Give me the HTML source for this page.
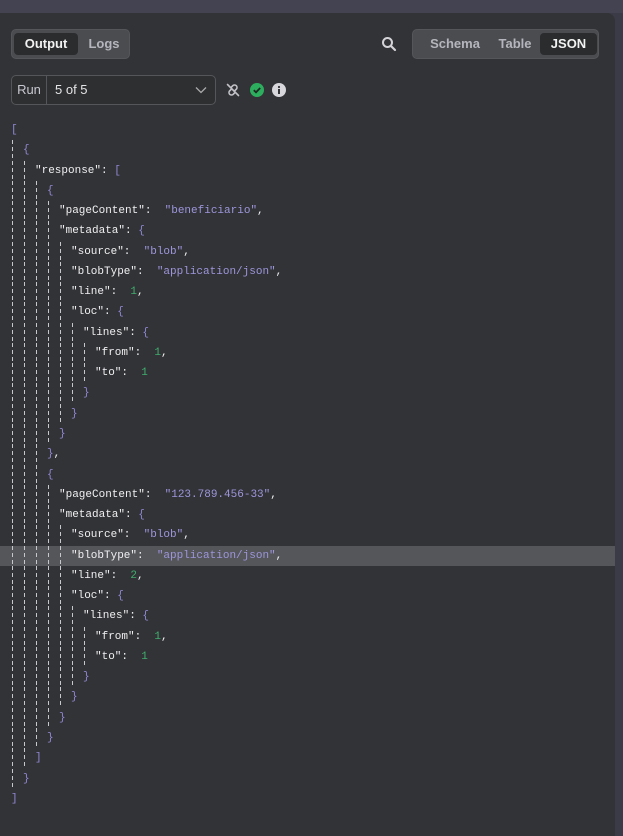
<!DOCTYPE html>
<html><head><meta charset="utf-8"><style>
*{margin:0;padding:0;box-sizing:border-box}
body{width:623px;height:836px;background:#3b3b47;position:relative;overflow:hidden;font-family:"Liberation Sans",sans-serif}
.top{position:absolute;left:0;top:0;width:623px;height:13px;background:#434352}
.panel{position:absolute;left:0;top:13px;width:615px;height:823px;background:#323336;border-top-right-radius:8px}
.seg{position:absolute;top:29px;height:30px;background:#4b4c50;border-radius:5px;border:1px solid #55565a}
.seg span{position:absolute;top:3px;height:22px;line-height:22px;font-size:13px;font-weight:bold;color:#b5b6bd;text-align:center}
.seg span.on{background:#2b2c2e;color:#f2f2f2;border-radius:4px}
.run{position:absolute;left:11px;top:75px;width:205px;height:30px;border:1px solid #55565a;border-radius:5px;background:#2e2f31}
.code{position:absolute;left:0;top:120px;font-family:"Liberation Mono","DejaVu Sans Mono",monospace;font-size:11px;color:#f0f0f2}
.l{position:relative;height:20.27px;line-height:20.27px;white-space:pre;width:615px}
.l.hl{background:#55565a}
.g{position:absolute;display:block;top:0;width:1px;height:20.27px;background:repeating-linear-gradient(to bottom,#c8c8cc 0 4px,transparent 4px 7px)}
.b{color:#8f87d2}.s{color:#9d96dc}.n{color:#3fae6e}
.v{margin-left:1px}
</style></head><body>
<div class="top"></div>
<div class="panel"></div>
<div class="seg" style="left:11px;width:119px"><span class="on" style="left:2px;width:64px">Output</span><span style="left:68px;width:48px">Logs</span></div>
<svg style="position:absolute;left:381px;top:36px" width="16" height="16" viewBox="0 0 16 16"><circle cx="6.5" cy="6.5" r="4.5" fill="none" stroke="#d4d4d8" stroke-width="2"/><line x1="10" y1="10" x2="14" y2="14" stroke="#d4d4d8" stroke-width="2.2" stroke-linecap="round"/></svg>
<div class="seg" style="left:412px;width:187px"><span style="left:6px;width:72px">Schema</span><span style="left:78px;width:48px">Table</span><span class="on" style="left:127px;width:57px">JSON</span></div>
<div class="run"><span style="position:absolute;left:0;top:0;width:35px;height:28px;line-height:28px;text-align:center;font-size:13px;color:#c8c8d0;border-right:1px solid #55565a">Run</span><span style="position:absolute;left:43px;top:0;line-height:28px;font-size:13px;color:#e4e4e6">5 of 5</span>
<svg style="position:absolute;left:183px;top:9px" width="12" height="10" viewBox="0 0 12 10"><path d="M1 2.5L6 7.5L11 2.5" fill="none" stroke="#aaa" stroke-width="1.3"/></svg></div>
<svg style="position:absolute;left:226px;top:83px" width="14" height="14" viewBox="0 0 14 14" fill="none" stroke="#c0c0c6" stroke-width="1.6" stroke-linecap="round"><path d="M5.5 4L7 2.5a2.5 2.5 0 0 1 3.5 3.5L9 7.5M8.5 10L7 11.5a2.5 2.5 0 0 1-3.5-3.5L5 6.5M1.5 1.5l11 11"/></svg>
<svg style="position:absolute;left:250px;top:83px" width="14" height="14" viewBox="0 0 14 14"><circle cx="7" cy="7" r="7" fill="#2dae5e"/><path d="M3.8 7.2L6 9.3L10.2 5" fill="none" stroke="#1d2a22" stroke-width="1.8"/></svg>
<svg style="position:absolute;left:272px;top:83px" width="14" height="14" viewBox="0 0 14 14"><circle cx="7" cy="7" r="7" fill="#d8d8dc"/><rect x="6" y="6" width="2" height="5" fill="#323336"/><circle cx="7" cy="4" r="1.1" fill="#323336"/></svg>
<div class="code">
<div class="l" style="padding-left:11px"><span class="b">[</span></div>
<div class="l" style="padding-left:23px"><span class="g" style="left:12px"></span><span class="b">{</span></div>
<div class="l" style="padding-left:35px"><span class="g" style="left:12px"></span><span class="g" style="left:24px"></span>"response": <span class="b">[</span></div>
<div class="l" style="padding-left:47px"><span class="g" style="left:12px"></span><span class="g" style="left:24px"></span><span class="g" style="left:36px"></span><span class="b">{</span></div>
<div class="l" style="padding-left:59px"><span class="g" style="left:12px"></span><span class="g" style="left:24px"></span><span class="g" style="left:36px"></span><span class="g" style="left:48px"></span>"pageContent":  <span class="s">"beneficiario"</span>,</div>
<div class="l" style="padding-left:59px"><span class="g" style="left:12px"></span><span class="g" style="left:24px"></span><span class="g" style="left:36px"></span><span class="g" style="left:48px"></span>"metadata": <span class="b">{</span></div>
<div class="l" style="padding-left:71px"><span class="g" style="left:12px"></span><span class="g" style="left:24px"></span><span class="g" style="left:36px"></span><span class="g" style="left:48px"></span><span class="g" style="left:60px"></span>"source":  <span class="s">"blob"</span>,</div>
<div class="l" style="padding-left:71px"><span class="g" style="left:12px"></span><span class="g" style="left:24px"></span><span class="g" style="left:36px"></span><span class="g" style="left:48px"></span><span class="g" style="left:60px"></span>"blobType":  <span class="s">"application/json"</span>,</div>
<div class="l" style="padding-left:71px"><span class="g" style="left:12px"></span><span class="g" style="left:24px"></span><span class="g" style="left:36px"></span><span class="g" style="left:48px"></span><span class="g" style="left:60px"></span>"line":  <span class="n">1</span>,</div>
<div class="l" style="padding-left:71px"><span class="g" style="left:12px"></span><span class="g" style="left:24px"></span><span class="g" style="left:36px"></span><span class="g" style="left:48px"></span><span class="g" style="left:60px"></span>"loc": <span class="b">{</span></div>
<div class="l" style="padding-left:83px"><span class="g" style="left:12px"></span><span class="g" style="left:24px"></span><span class="g" style="left:36px"></span><span class="g" style="left:48px"></span><span class="g" style="left:60px"></span><span class="g" style="left:72px"></span>"lines": <span class="b">{</span></div>
<div class="l" style="padding-left:95px"><span class="g" style="left:12px"></span><span class="g" style="left:24px"></span><span class="g" style="left:36px"></span><span class="g" style="left:48px"></span><span class="g" style="left:60px"></span><span class="g" style="left:72px"></span><span class="g" style="left:84px"></span>"from":  <span class="n">1</span>,</div>
<div class="l" style="padding-left:95px"><span class="g" style="left:12px"></span><span class="g" style="left:24px"></span><span class="g" style="left:36px"></span><span class="g" style="left:48px"></span><span class="g" style="left:60px"></span><span class="g" style="left:72px"></span><span class="g" style="left:84px"></span>"to":  <span class="n">1</span></div>
<div class="l" style="padding-left:83px"><span class="g" style="left:12px"></span><span class="g" style="left:24px"></span><span class="g" style="left:36px"></span><span class="g" style="left:48px"></span><span class="g" style="left:60px"></span><span class="g" style="left:72px"></span><span class="b">}</span></div>
<div class="l" style="padding-left:71px"><span class="g" style="left:12px"></span><span class="g" style="left:24px"></span><span class="g" style="left:36px"></span><span class="g" style="left:48px"></span><span class="g" style="left:60px"></span><span class="b">}</span></div>
<div class="l" style="padding-left:59px"><span class="g" style="left:12px"></span><span class="g" style="left:24px"></span><span class="g" style="left:36px"></span><span class="g" style="left:48px"></span><span class="b">}</span></div>
<div class="l" style="padding-left:47px"><span class="g" style="left:12px"></span><span class="g" style="left:24px"></span><span class="g" style="left:36px"></span><span class="b">}</span>,</div>
<div class="l" style="padding-left:47px"><span class="g" style="left:12px"></span><span class="g" style="left:24px"></span><span class="g" style="left:36px"></span><span class="b">{</span></div>
<div class="l" style="padding-left:59px"><span class="g" style="left:12px"></span><span class="g" style="left:24px"></span><span class="g" style="left:36px"></span><span class="g" style="left:48px"></span>"pageContent":  <span class="s">"123.789.456-33"</span>,</div>
<div class="l" style="padding-left:59px"><span class="g" style="left:12px"></span><span class="g" style="left:24px"></span><span class="g" style="left:36px"></span><span class="g" style="left:48px"></span>"metadata": <span class="b">{</span></div>
<div class="l" style="padding-left:71px"><span class="g" style="left:12px"></span><span class="g" style="left:24px"></span><span class="g" style="left:36px"></span><span class="g" style="left:48px"></span><span class="g" style="left:60px"></span>"source":  <span class="s">"blob"</span>,</div>
<div class="l hl" style="padding-left:71px"><span class="g" style="left:12px"></span><span class="g" style="left:24px"></span><span class="g" style="left:36px"></span><span class="g" style="left:48px"></span><span class="g" style="left:60px"></span>"blobType":  <span class="s">"application/json"</span>,</div>
<div class="l" style="padding-left:71px"><span class="g" style="left:12px"></span><span class="g" style="left:24px"></span><span class="g" style="left:36px"></span><span class="g" style="left:48px"></span><span class="g" style="left:60px"></span>"line":  <span class="n">2</span>,</div>
<div class="l" style="padding-left:71px"><span class="g" style="left:12px"></span><span class="g" style="left:24px"></span><span class="g" style="left:36px"></span><span class="g" style="left:48px"></span><span class="g" style="left:60px"></span>"loc": <span class="b">{</span></div>
<div class="l" style="padding-left:83px"><span class="g" style="left:12px"></span><span class="g" style="left:24px"></span><span class="g" style="left:36px"></span><span class="g" style="left:48px"></span><span class="g" style="left:60px"></span><span class="g" style="left:72px"></span>"lines": <span class="b">{</span></div>
<div class="l" style="padding-left:95px"><span class="g" style="left:12px"></span><span class="g" style="left:24px"></span><span class="g" style="left:36px"></span><span class="g" style="left:48px"></span><span class="g" style="left:60px"></span><span class="g" style="left:72px"></span><span class="g" style="left:84px"></span>"from":  <span class="n">1</span>,</div>
<div class="l" style="padding-left:95px"><span class="g" style="left:12px"></span><span class="g" style="left:24px"></span><span class="g" style="left:36px"></span><span class="g" style="left:48px"></span><span class="g" style="left:60px"></span><span class="g" style="left:72px"></span><span class="g" style="left:84px"></span>"to":  <span class="n">1</span></div>
<div class="l" style="padding-left:83px"><span class="g" style="left:12px"></span><span class="g" style="left:24px"></span><span class="g" style="left:36px"></span><span class="g" style="left:48px"></span><span class="g" style="left:60px"></span><span class="g" style="left:72px"></span><span class="b">}</span></div>
<div class="l" style="padding-left:71px"><span class="g" style="left:12px"></span><span class="g" style="left:24px"></span><span class="g" style="left:36px"></span><span class="g" style="left:48px"></span><span class="g" style="left:60px"></span><span class="b">}</span></div>
<div class="l" style="padding-left:59px"><span class="g" style="left:12px"></span><span class="g" style="left:24px"></span><span class="g" style="left:36px"></span><span class="g" style="left:48px"></span><span class="b">}</span></div>
<div class="l" style="padding-left:47px"><span class="g" style="left:12px"></span><span class="g" style="left:24px"></span><span class="g" style="left:36px"></span><span class="b">}</span></div>
<div class="l" style="padding-left:35px"><span class="g" style="left:12px"></span><span class="g" style="left:24px"></span><span class="b">]</span></div>
<div class="l" style="padding-left:23px"><span class="g" style="left:12px"></span><span class="b">}</span></div>
<div class="l" style="padding-left:11px"><span class="b">]</span></div>
</div>
</body></html>
